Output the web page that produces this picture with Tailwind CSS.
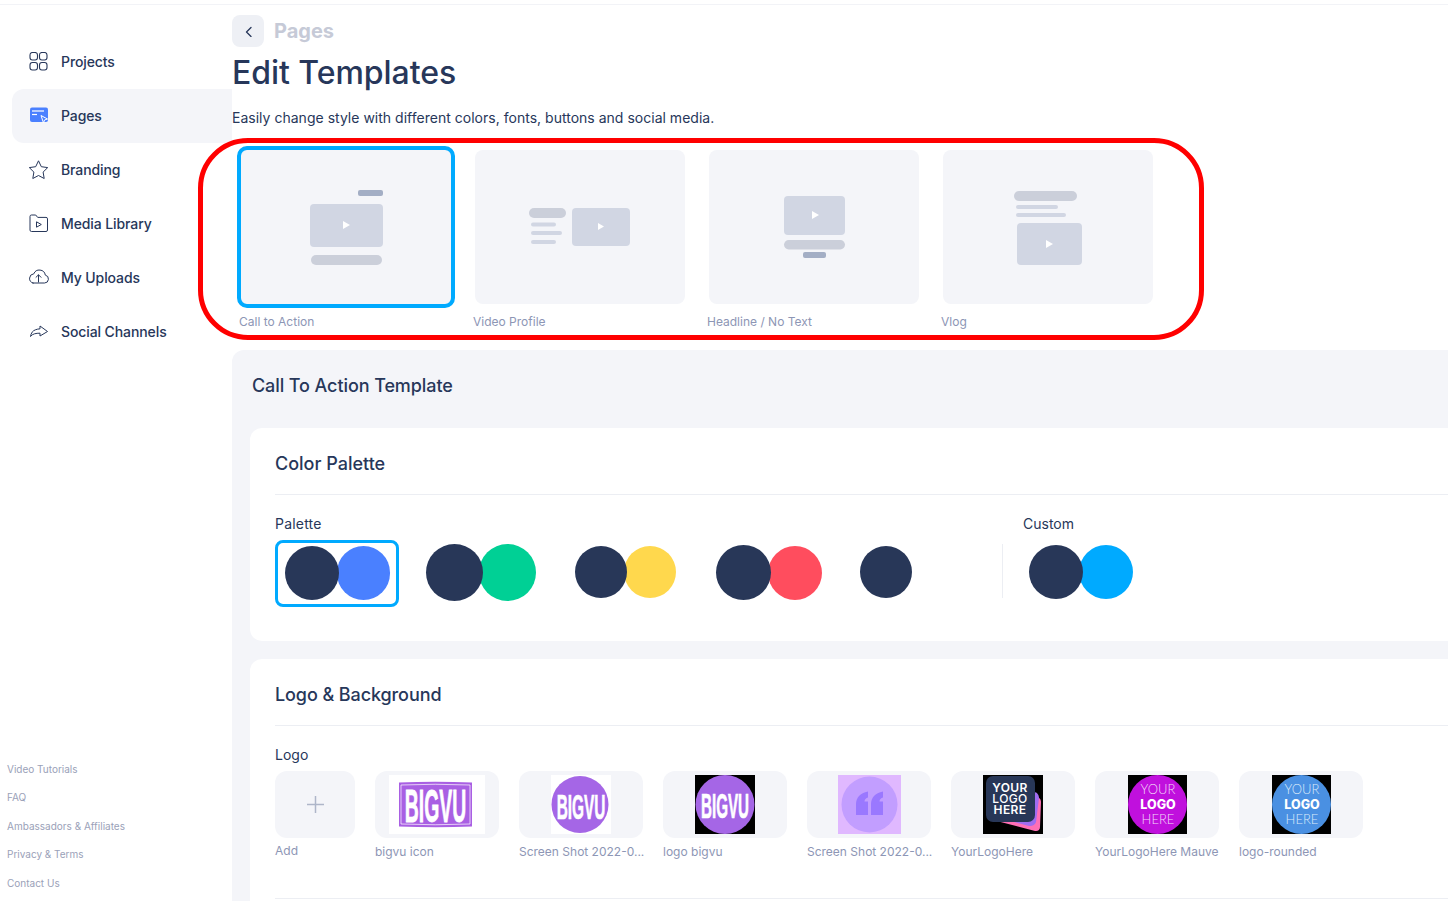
<!DOCTYPE html>
<html lang="en">
<head>
<meta charset="utf-8">
<title>Edit Templates</title>
<script src="https://cdn.jsdelivr.net/npm/@tailwindcss/browser@4"></script>
</head>
<body class="bg-white">
<div class="relative h-[901px] w-[1448px] overflow-hidden bg-white font-['Inter','Noto_Sans',sans-serif] text-[#27375a]">
  <div class="h-[5px] border-b border-[#f2f3f7]"></div>
  <div class="flex h-[896px]">
    <!-- Sidebar -->
    <aside class="flex w-[232px] shrink-0 flex-col justify-between pt-[30px] pb-[3.500px]">
      <nav class="pl-[12px] text-[14px] font-medium tracking-[-0.1px]">
        <a class="flex h-[54px] items-center gap-[12px] pl-[16px]">
          <svg class="h-[20px] w-[21px]" viewBox="0 0 21 20" fill="none" stroke="#27375a" stroke-width="1.1"><rect x="2" y="0.5" width="7.500" height="7.500" rx="2.400"/><rect x="11.500" y="0.5" width="7.500" height="7.500" rx="2.400"/><rect x="2" y="10.500" width="7.500" height="7.500" rx="2.400"/><rect x="11.500" y="10.500" width="7.500" height="7.500" rx="2.400"/></svg>
          <span class="pb-[2px]">Projects</span>
        </a>
        <a class="flex h-[54px] items-center gap-[12px] rounded-l-[12px] bg-[#f4f5f9] pl-[16px]">
          <svg class="h-[20px] w-[21px]" viewBox="0 0 21 20"><rect x="2" y="1.500" width="18" height="14.500" rx="2" fill="#4a80ff"/><path d="M4 5h12" stroke="#fff" stroke-width="1.200"/><path d="M4 8.500h5" stroke="#fff" stroke-width="1.200"/><path d="M13 9.500l6.500 3.500-3 1-1 3z" fill="#4a80ff" stroke="#fff" stroke-width="1"/></svg>
          <span class="pb-[2px]">Pages</span>
        </a>
        <a class="flex h-[54px] items-center gap-[12px] pl-[16px]">
          <svg class="h-[20px] w-[21px]" viewBox="0 0 21 20" fill="none" stroke="#27375a" stroke-width="1" stroke-linejoin="round"><path d="M10.500 .8l2.800 5.900 6.400.9-4.600 4.500 1.100 6.400-5.700-3-5.700 3 1.100-6.400L1.300 7.600l6.400-.9z"/></svg>
          <span class="pb-[2px]">Branding</span>
        </a>
        <a class="flex h-[54px] items-center gap-[12px] pl-[16px]">
          <svg class="h-[20px] w-[21px]" viewBox="0 0 21 20" fill="none" stroke="#27375a" stroke-width="1" stroke-linejoin="round"><path d="M2 2.500a1.500 1.500 0 0 1 1.500-1.500h4.200l2 2.400h8.300a1.500 1.500 0 0 1 1.500 1.500v11.100a1.500 1.500 0 0 1-1.500 1.500h-14.500a1.500 1.500 0 0 1-1.500-1.500z"/><path d="M8.500 7.800l4.800 2.700-4.800 2.700z"/></svg>
          <span class="pb-[2px]">Media Library</span>
        </a>
        <a class="flex h-[54px] items-center gap-[12px] pl-[16px]">
          <svg class="h-[20px] w-[21px]" viewBox="0 0 21 20" fill="none" stroke="#27375a" stroke-width="1" stroke-linecap="round" stroke-linejoin="round"><path d="M5 16h11.500a4 4 0 0 0 .8-7.900 6 6 0 0 0-11.500-1.300 4.700 4.700 0 0 0-.8 9.200z" transform="translate(0 -1)"/><path d="M10.500 14V7M8 9.300l2.500-2.500 2.500 2.500"/></svg>
          <span class="pb-[2px]">My Uploads</span>
        </a>
        <a class="flex h-[54px] items-center gap-[12px] pl-[16px]">
          <svg class="h-[20px] w-[21px]" viewBox="0 0 21 20" fill="none" stroke="#27375a" stroke-width="1" stroke-linejoin="round"><path d="M12 4l7.500 5.500-7.500 4.500v-2.800c-4 0-7.500.5-9.500 3.300 .2-1.500.7-3 1.700-4.400 1.500-2 4.300-3 7.800-3.300z"/></svg>
          <span class="pb-[2px]">Social Channels</span>
        </a>
      </nav>
      <ul class="pl-[7px] text-[10px] text-[#9aa1b8]">
        <li class="flex h-[28.500px] items-center">Video Tutorials</li>
        <li class="flex h-[28.500px] items-center">FAQ</li>
        <li class="flex h-[28.500px] items-center">Ambassadors &amp; Affiliates</li>
        <li class="flex h-[28.500px] items-center">Privacy &amp; Terms</li>
        <li class="flex h-[28.500px] items-center">Contact Us</li>
      </ul>
    </aside>

    <!-- Main -->
    <main class="min-w-0 flex-1">
      <div class="mt-[10px] flex h-[32px] items-center gap-[10px]">
        <button class="flex h-[32px] w-[32px] items-center justify-center rounded-[8px] bg-[#eef0f5]">
          <svg class="h-[12px] w-[12px]" viewBox="0 0 12 12" fill="none" stroke="#27375a" stroke-width="1.300" stroke-linecap="round" stroke-linejoin="round"><path d="M9 2.500L4.500 7 9 11.500"/></svg>
        </button>
        <span class="text-[20px] font-bold text-[#c6cad7]">Pages</span>
      </div>
      <h1 class="mt-[6px] text-[32px] leading-[40px] font-medium tracking-[-0.04px]">Edit Templates</h1>
      <p class="mt-[15px] text-[14px] leading-[20px] tracking-[0.015px]">Easily change style with different colors, fonts, buttons and social media.</p>

      <!-- Templates -->
      <div class="mt-[18px] flex pl-[5px]">
        <div class="w-[236px]">
          <div class="h-[162px] w-[218px] rounded-[10px] border-4 border-[#00aaff] bg-[#f4f5f9]">
            <svg class="h-[154px] w-[210px]" viewBox="0 0 210 154"><rect x="117" y="40" width="25" height="6" rx="2" fill="#a3aec5"/><rect x="69" y="54" width="73" height="43" rx="4" fill="#d1d6e3"/><path d="M102 71l7 4-7 4z" fill="#fff"/><rect x="70" y="105" width="71" height="10" rx="5" fill="#cbcfda"/></svg>
          </div>
          <p class="mt-[6px] pl-[2px] text-[12px] leading-[16px] text-[#8d96b5]">Call to Action</p>
        </div>
        <div class="w-[234px] pt-[4px]">
          <div class="ml-[2px] h-[154px] w-[210px] rounded-[8px] bg-[#f4f5f9]">
            <svg class="h-[154px] w-[210px]" viewBox="0 0 210 154"><rect x="54" y="58" width="37" height="10" rx="5" fill="#cbcfda"/><rect x="56" y="72.500" width="25" height="4" rx="2" fill="#d1d6e3"/><rect x="56" y="81" width="31" height="4" rx="2" fill="#d1d6e3"/><rect x="56" y="90" width="25" height="4" rx="2" fill="#d1d6e3"/><rect x="97" y="58" width="58" height="38" rx="4" fill="#d1d6e3"/><path d="M123 73l6 3.500-6 3.500z" fill="#fff"/></svg>
          </div>
          <p class="mt-[10px] text-[12px] leading-[16px] text-[#8d96b5]">Video Profile</p>
        </div>
        <div class="w-[234px] pt-[4px]">
          <div class="ml-[2px] h-[154px] w-[210px] rounded-[8px] bg-[#f4f5f9]">
            <svg class="h-[154px] w-[210px]" viewBox="0 0 210 154"><rect x="75" y="46" width="61" height="39" rx="4" fill="#d1d6e3"/><path d="M103 61l7 4-7 4z" fill="#fff"/><rect x="75" y="90" width="61" height="9.500" rx="4.700" fill="#cbcfda"/><rect x="94" y="102" width="23" height="6" rx="2" fill="#a3aec5"/></svg>
          </div>
          <p class="mt-[10px] text-[12px] leading-[16px] text-[#8d96b5]">Headline / No Text</p>
        </div>
        <div class="w-[234px] pt-[4px]">
          <div class="ml-[2px] h-[154px] w-[210px] rounded-[8px] bg-[#f4f5f9]">
            <svg class="h-[154px] w-[210px]" viewBox="0 0 210 154"><rect x="71" y="41" width="63" height="10" rx="5" fill="#cbcfda"/><rect x="73" y="55" width="42" height="4" rx="2" fill="#d1d6e3"/><rect x="73" y="63" width="50" height="4" rx="2" fill="#d1d6e3"/><rect x="74" y="73" width="65" height="42" rx="4" fill="#d1d6e3"/><path d="M103 90l7 4-7 4z" fill="#fff"/></svg>
          </div>
          <p class="mt-[10px] text-[12px] leading-[16px] text-[#8d96b5]">Vlog</p>
        </div>
      </div>

      <!-- Panel -->
      <section class="mt-[20px] h-[560px] rounded-tl-[12px] bg-[#f4f5f9] pl-[18px]">
        <h2 class="pt-[24px] pl-[2px] text-[18px] leading-[24px] font-medium tracking-[-0.09px]">Call To Action Template</h2>

        <div class="mt-[30px] h-[213px] rounded-l-[12px] bg-white pl-[25px]">
          <h3 class="pt-[24px] text-[18px] leading-[24px] font-medium">Color Palette</h3>
          <div class="mt-[18px] border-t border-[#eceef3] pt-[20px]">
            <div class="flex">
              <div class="w-[748px] text-[14px] leading-[18px] tracking-[0.2px]">Palette</div>
              <div class="text-[14px] leading-[18px]">Custom</div>
            </div>
            <div class="mt-[7px] flex items-center">
              <div class="flex h-[67px] w-[124px] items-center rounded-[8px] border-[3px] border-[#00aaff] pl-[7px] pb-[1px]">
                <span class="z-10 h-[54px] w-[54px] rounded-full bg-[#283758]"></span>
                <span class="-ml-[2px] h-[54px] w-[53px] rounded-full bg-[#4a80ff]"></span>
              </div>
              <div class="-mt-[2px] ml-[27px] flex items-center">
                <span class="z-10 h-[57px] w-[57px] rounded-full bg-[#283758]"></span>
                <span class="-ml-[4px] h-[57px] w-[57px] rounded-full bg-[#00d095]"></span>
              </div>
              <div class="-mt-[3px] ml-[39px] flex items-center">
                <span class="z-10 h-[52px] w-[52px] rounded-full bg-[#283758]"></span>
                <span class="-ml-[3px] h-[52px] w-[52px] rounded-full bg-[#ffd84d]"></span>
              </div>
              <div class="-mt-[2px] ml-[40px] flex items-center">
                <span class="z-10 h-[55px] w-[55px] rounded-full bg-[#283758]"></span>
                <span class="-ml-[3px] h-[54px] w-[54px] rounded-full bg-[#ff4d5e]"></span>
              </div>
              <span class="-mt-[3px] ml-[38px] h-[52px] w-[52px] rounded-full bg-[#283758]"></span>
              <span class="-mt-[5px] ml-[90px] h-[54px] w-px bg-[#eceef3]"></span>
              <div class="-mt-[3px] ml-[26px] flex items-center">
                <span class="z-10 h-[54px] w-[54px] rounded-full bg-[#283758]"></span>
                <span class="-ml-[4px] h-[54px] w-[54px] rounded-full bg-[#00aaff]"></span>
              </div>
            </div>
          </div>
        </div>

        <div class="mt-[18px] h-[300px] rounded-l-[12px] bg-white pl-[25px]">
          <h3 class="pt-[24px] text-[18px] leading-[24px] font-medium tracking-[-0.09px]">Logo &amp; Background</h3>
          <div class="mt-[18px] border-t border-[#eceef3] pt-[20px]">
            <div class="text-[14px] leading-[18px]">Logo</div>
            <div class="mt-[7px] flex gap-[20px] border-b border-[#eceef3] pb-[38px] text-[12px] leading-[16px] text-[#8d96b5]">
              <div class="w-[80px]">
                <div class="flex h-[67px] items-center justify-center rounded-[12px] bg-[#f4f5f9]">
                  <svg class="h-[19px] w-[19px]" viewBox="0 0 19 19" stroke="#aeb6c9" stroke-width="1.500"><path d="M9.500 1v17M1 9.500h17"/></svg>
                </div>
                <p class="mt-[5px]">Add</p>
              </div>
              <div class="w-[124px]">
                <div class="flex h-[67px] items-center justify-center rounded-[12px] bg-[#f4f5f9]">
                  <svg class="h-[59px] w-[96px]" viewBox="0 0 96 59"><rect width="96" height="59" fill="#fff"/><path d="M10 7.500q36-1.500 73 0v44q-36 1.500-73 0z" fill="#a95fe3"/><path d="M12 10q34-1.500 69 0v39q-35 1.500-69 0z" fill="none" stroke="#fff" stroke-width=".7"/><text transform="translate(46.500 46.700) scale(.97 2.300)" text-anchor="middle" font-family="Liberation Sans" font-weight="700" font-size="20" stroke="#fff" stroke-width=".35" fill="#fff">BIGVU</text></svg>
                </div>
                <p class="mt-[6px] whitespace-nowrap">bigvu icon</p>
              </div>
              <div class="w-[124px]">
                <div class="flex h-[67px] items-center justify-center rounded-[12px] bg-[#f4f5f9]">
                  <svg class="h-[59px] w-[60px]" viewBox="0 0 60 59"><rect width="60" height="59" fill="#fff"/><circle cx="29" cy="29.500" r="28.500" fill="#a566e6"/><text transform="translate(30 44) scale(.77 1.800)" text-anchor="middle" font-family="Liberation Sans" font-weight="700" font-size="20" stroke="#fff" stroke-width=".4" fill="#fff">BIGVU</text></svg>
                </div>
                <p class="mt-[6px] whitespace-nowrap">Screen Shot 2022-0...</p>
              </div>
              <div class="w-[124px]">
                <div class="flex h-[67px] items-center justify-center rounded-[12px] bg-[#f4f5f9]">
                  <svg class="h-[59px] w-[60px]" viewBox="0 0 60 59"><rect width="60" height="59" fill="#000"/><circle cx="30" cy="29.500" r="29.500" fill="#a566e6"/><text transform="translate(30 43) scale(.76 1.800)" text-anchor="middle" font-family="Liberation Sans" font-weight="700" font-size="20" stroke="#fff" stroke-width=".4" fill="#fff">BIGVU</text></svg>
                </div>
                <p class="mt-[6px] whitespace-nowrap">logo bigvu</p>
              </div>
              <div class="w-[124px]">
                <div class="flex h-[67px] items-center justify-center rounded-[12px] bg-[#f4f5f9]">
                  <svg class="h-[59px] w-[63px]" viewBox="0 0 63 59"><rect width="63" height="59" fill="#e0b8ff"/><circle cx="31.500" cy="29.500" r="28" fill="#c29eff"/><path d="M18 40V29c0-6 4-11 12-12.500v6c-2 .5-3.500 2-3.500 4H30v13.500zM33 40V29c0-6 4-11 12-12.500v6c-2 .5-3.500 2-3.500 4H45v13.500z" fill="#9a78ff"/></svg>
                </div>
                <p class="mt-[6px] whitespace-nowrap">Screen Shot 2022-0...</p>
              </div>
              <div class="w-[124px]">
                <div class="flex h-[67px] items-center justify-center rounded-[12px] bg-[#f4f5f9]">
                  <svg class="h-[59px] w-[60px]" viewBox="0 0 60 59"><rect width="60" height="59" fill="#000"/><path d="M6 44l46 12c3 .5 5-1 5-4l1-25c0-3-2-5-5-5H10z" fill="#ff6fb5"/><path d="M4 40l42 11c3 .5 6-1 7-4l3-24c0-3-2-6-5-6H6z" fill="#a06cf0"/><rect x="3" y="1" width="49" height="46" rx="7" fill="#283758"/><text x="27" y="17" text-anchor="middle" font-family="Inter" font-weight="600" font-size="12" letter-spacing=".4" fill="#fff">YOUR</text><text x="27" y="28" text-anchor="middle" font-family="Inter" font-weight="500" font-size="12" letter-spacing=".4" fill="#fff">LOGO</text><text x="27" y="39" text-anchor="middle" font-family="Inter" font-weight="600" font-size="12" letter-spacing=".4" fill="#fff">HERE</text></svg>
                </div>
                <p class="mt-[6px] whitespace-nowrap">YourLogoHere</p>
              </div>
              <div class="w-[124px]">
                <div class="flex h-[67px] items-center justify-center rounded-[12px] bg-[#f4f5f9]">
                  <svg class="h-[59px] w-[59px]" viewBox="0 0 59 59"><rect width="59" height="59" fill="#000"/><circle cx="29.500" cy="29.500" r="29.500" fill="#c010dd"/><text x="30" y="19" text-anchor="middle" font-family="Lato" font-weight="300" font-size="13" fill="#f2d9f8">YOUR</text><text x="30" y="34" text-anchor="middle" font-family="Inter" font-weight="800" font-size="12.500" fill="#fff">LOGO</text><text x="30" y="49" text-anchor="middle" font-family="Lato" font-weight="300" font-size="13" fill="#f2d9f8">HERE</text></svg>
                </div>
                <p class="mt-[6px] whitespace-nowrap">YourLogoHere Mauve</p>
              </div>
              <div class="w-[124px]">
                <div class="flex h-[67px] items-center justify-center rounded-[12px] bg-[#f4f5f9]">
                  <svg class="h-[59px] w-[59px]" viewBox="0 0 59 59"><rect width="59" height="59" fill="#000"/><circle cx="29.500" cy="29.500" r="29.500" fill="#4a90e2"/><text x="30" y="19" text-anchor="middle" font-family="Lato" font-weight="300" font-size="13" fill="#dbeafa">YOUR</text><text x="30" y="34" text-anchor="middle" font-family="Inter" font-weight="800" font-size="12.500" fill="#fff">LOGO</text><text x="30" y="49" text-anchor="middle" font-family="Lato" font-weight="300" font-size="13" fill="#dbeafa">HERE</text></svg>
                </div>
                <p class="mt-[6px] whitespace-nowrap">logo-rounded</p>
              </div>
              <div class="flex-1"></div>
            </div>
          </div>
        </div>
      </section>
    </main>
  </div>
  <!-- Red annotation -->
  <div class="pointer-events-none absolute left-[198px] top-[138px] h-[202px] w-[1006px] rounded-[50px] border-[5px] border-[#ff0000]"></div>
</div>
</body>
</html>
